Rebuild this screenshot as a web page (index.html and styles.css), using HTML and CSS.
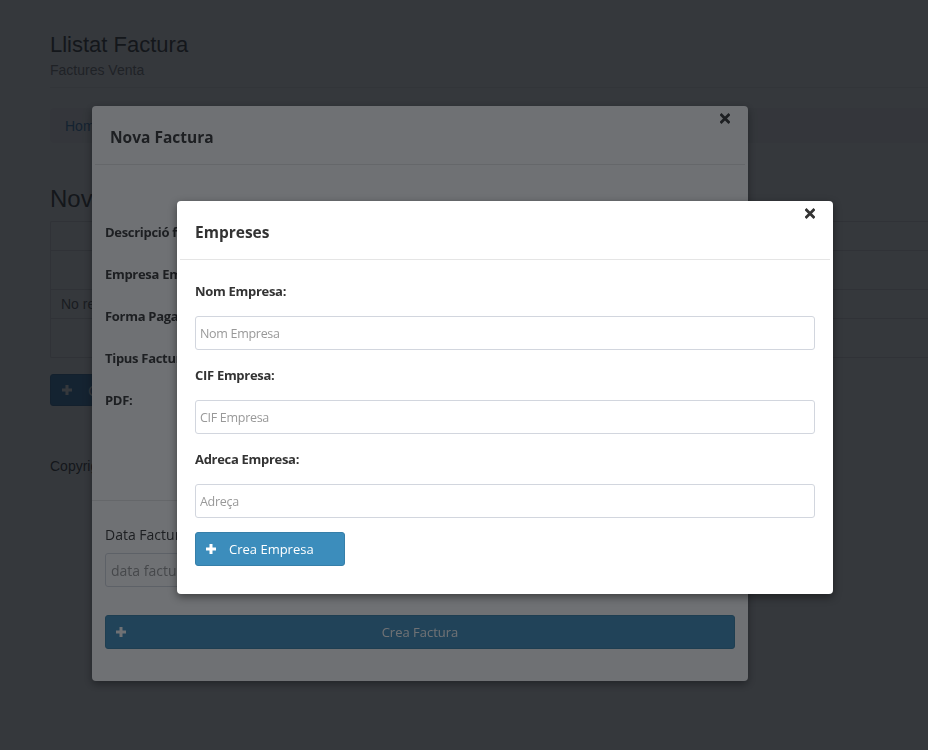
FILE: index.html
```html
<!DOCTYPE html>
<html lang="ca">
<head>
<meta charset="utf-8">
<title>Llistat Factura</title>
<link rel="stylesheet" href="styles.css">
</head>
<body>
<div class="page">
  <div class="page-header">
    <h1 class="page-title">Llistat Factura</h1>
    <div class="page-sub">Factures Venta</div>
  </div>
  <div class="breadcrumb"><a class="crumb" href="#">Home</a></div>
  <h2 class="section-title">Nova Factura</h2>
  <div class="table">
    <div class="trow trow-head"></div>
    <div class="trow trow-tall"></div>
    <div class="trow trow-empty">No results found.</div>
    <div class="trow trow-tall"></div>
  </div>
  <button class="btn btn-page" type="button">
    <svg class="plus" width="10" height="10" viewBox="0 0 10 10"><path d="M3.5 0h3v3.5H10v3H6.5V10h-3V6.5H0v-3h3.5z" fill="#fff"/></svg>
    <span>Crea Factura</span>
  </button>
  <div class="copyright">Copyright © 2016 Factures. Tots els drets reservats.</div>
</div>

<div class="backdrop"></div>

<div class="modal modal-factura">
  <div class="modal-header">
    <h4 class="modal-title">Nova Factura</h4>
    <button class="close" type="button" aria-label="Tanca">
      <svg width="10" height="11" viewBox="0 0 10 11"><path d="M1.5 2L8.5 9M8.5 2L1.5 9" stroke="#333" stroke-width="2.8" stroke-linecap="square"/></svg>
    </button>
  </div>
  <div class="modal-body factura-body">
    <div class="frow"><label class="lbl">Descripció factura:</label><span class="fld"></span></div>
    <div class="frow"><label class="lbl">Empresa Emissora:</label><span class="fld"></span></div>
    <div class="frow"><label class="lbl">Forma Pagament:</label><span class="fld"></span></div>
    <div class="frow"><label class="lbl">Tipus Factura:</label><span class="fld"></span></div>
    <div class="frow"><label class="lbl">PDF:</label><span class="fld"></span></div>
  </div>
  <div class="factura-footer">
    <label class="lbl-plain">Data Factura:</label>
    <div class="input input-date">data factura</div>
    <button class="btn btn-block" type="button">
      <svg class="plus" width="10" height="10" viewBox="0 0 10 10"><path d="M3.5 0h3v3.5H10v3H6.5V10h-3V6.5H0v-3h3.5z" fill="#fff"/></svg>
      <span class="btn-block-text">Crea Factura</span>
    </button>
  </div>
</div>

<div class="backdrop"></div>

<div class="modal modal-empreses">
  <div class="modal-header">
    <h4 class="modal-title">Empreses</h4>
    <button class="close" type="button" aria-label="Tanca">
      <svg width="10" height="11" viewBox="0 0 10 11"><path d="M1.5 2L8.5 9M8.5 2L1.5 9" stroke="#333" stroke-width="2.8" stroke-linecap="square"/></svg>
    </button>
  </div>
  <div class="modal-body empreses-body">
    <label class="lbl">Nom Empresa:</label>
    <div class="input">Nom Empresa</div>
    <label class="lbl">CIF Empresa:</label>
    <div class="input">CIF Empresa</div>
    <label class="lbl">Adreca Empresa:</label>
    <div class="input">Adreça</div>
    <button class="btn btn-primary" type="button">
      <svg class="plus" width="10" height="10" viewBox="0 0 10 10"><path d="M3.5 0h3v3.5H10v3H6.5V10h-3V6.5H0v-3h3.5z" fill="#fff"/></svg>
      <span>Crea Empresa</span>
    </button>
  </div>
</div>
</body>
</html>
```

FILE: styles.css
```css
html, body {
  margin: 0;
  padding: 0;
  height: 100%;
  overflow: hidden;
  background: #ffffff;
}

body {
  font-family: "Liberation Sans", Arial, sans-serif;
  color: #333333;
  font-size: 14px;
}

.page {
  width: 928px;
  box-sizing: border-box;
  padding: 0 0 0 50px;
  display: flex;
  flex-direction: column;
  align-items: flex-start;
}

.page-header {
  align-self: stretch;
  padding-top: 32px;
  padding-bottom: 7px;
  border-bottom: 1px solid #eeeeee;
}

.page-title {
  margin: 0;
  font-size: 22px;
  line-height: 26px;
  font-weight: normal;
  color: #333333;
}

.page-sub {
  font-size: 14px;
  line-height: 20px;
  padding-top: 2px;
  color: #777777;
}

.breadcrumb {
  align-self: stretch;
  margin-top: 20px;
  height: 35px;
  box-sizing: border-box;
  padding: 0 15px;
  display: flex;
  align-items: center;
  background: #f5f5f5;
  border-radius: 4px 0 0 4px;
}

.crumb {
  color: #337ab7;
  text-decoration: none;
  font-size: 14px;
}

.section-title {
  margin: 41px 0 0;
  font-size: 24px;
  line-height: 30px;
  font-weight: normal;
  color: #333333;
}

.table {
  align-self: stretch;
  margin-top: 7px;
  border: 1px solid #dddddd;
  border-right: 0;
  border-radius: 2px 0 0 2px;
}

.trow {
  height: 29px;
  border-top: 1px solid #dddddd;
  box-sizing: border-box;
  display: flex;
  align-items: center;
  padding-left: 10px;
  font-size: 14px;
  color: #555555;
}

.trow:first-child {
  border-top: 0;
  height: 28px;
}

.trow-tall {
  height: 39px;
}

.btn {
  font-family: "Open Sans", "Noto Sans", sans-serif;
  border-radius: 3px;
  cursor: pointer;
  display: flex;
  align-items: center;
  box-sizing: border-box;
  color: #ffffff;
}

.btn-page {
  margin-top: 16px;
  height: 32px;
  width: 150px;
  padding: 0 11px;
  gap: 16px;
  background: #337ab7;
  border: 1px solid #2e6da4;
  font-size: 14px;
}

.copyright {
  margin-top: 52px;
  font-size: 14px;
  color: #333333;
}

.backdrop {
  position: fixed;
  inset: 0;
  background: rgba(15, 19, 23, 0.6);
}

.modal {
  position: absolute;
  width: 656px;
  background: #ffffff;
  border-radius: 4px;
  box-shadow: 0 3px 9px rgba(0, 0, 0, 0.45);
  font-family: "Open Sans", "Noto Sans", sans-serif;
  display: flex;
  flex-direction: column;
}

.modal-factura {
  left: 92px;
  top: 106px;
  height: 575px;
}

.modal-empreses {
  left: 177px;
  top: 201px;
  height: 393px;
}

.modal-header {
  position: relative;
  height: 59px;
  box-sizing: border-box;
  margin: 0 3px;
  padding: 18px 15px 0;
  border-bottom: 1px solid #e5e5e5;
}

.modal-title {
  margin: 0;
  font-size: 15.5px;
  line-height: 26px;
  font-weight: 700;
  color: #333333;
}

.close {
  position: absolute;
  top: 7px;
  right: 15px;
  padding: 0;
  border: 0;
  background: transparent;
  width: 10px;
  height: 11px;
  display: flex;
  cursor: pointer;
}

.lbl {
  font-size: 13px;
  font-weight: 700;
  line-height: 20px;
  letter-spacing: -0.3px;
  color: #333333;
}

.factura-body {
  padding: 46px 13px 79px;
  display: flex;
  flex-direction: column;
}

.frow {
  height: 42px;
  display: flex;
  align-items: center;
  gap: 20px;
}

.frow .lbl {
  width: 160px;
}

.fld {
  flex: 1;
  height: 34px;
  border: 1px solid #d2d6de;
  border-radius: 3px;
}

.factura-footer {
  border-top: 1px solid #e5e5e5;
  padding: 24px 13px 0;
  display: flex;
  flex-direction: column;
}

.lbl-plain {
  font-size: 14px;
  line-height: 20px;
  color: #333333;
}

.input {
  height: 34px;
  box-sizing: border-box;
  border: 1px solid #d2d6de;
  border-radius: 3px;
  padding: 0 4px;
  display: flex;
  align-items: center;
  font-size: 12.5px;
  letter-spacing: -0.3px;
  color: #999999;
  background: #ffffff;
}

.input-date {
  margin-top: 8px;
  font-size: 14px;
  letter-spacing: 0;
  padding: 0 5px;
}

.btn-block {
  margin-top: 28px;
  height: 34px;
  padding: 0 10px;
  background: #3c8dbc;
  border: 1px solid #367fa9;
  font-size: 13px;
}

.btn-block-text {
  flex: 1;
  text-align: center;
  margin-right: 10px;
}

.empreses-body {
  padding: 21px 18px 0;
  display: flex;
  flex-direction: column;
  align-items: stretch;
}

.empreses-body .input {
  margin-top: 15px;
  margin-bottom: 15px;
}

.empreses-body .btn-primary {
  margin-top: -1px;
}

.btn-primary {
  align-self: flex-start;
  width: 150px;
  height: 34px;
  padding: 0 0 0 10px;
  gap: 13px;
  background: #3c8dbc;
  border: 1px solid #367fa9;
  font-size: 13px;
}

.plus {
  flex: none;
}
```
